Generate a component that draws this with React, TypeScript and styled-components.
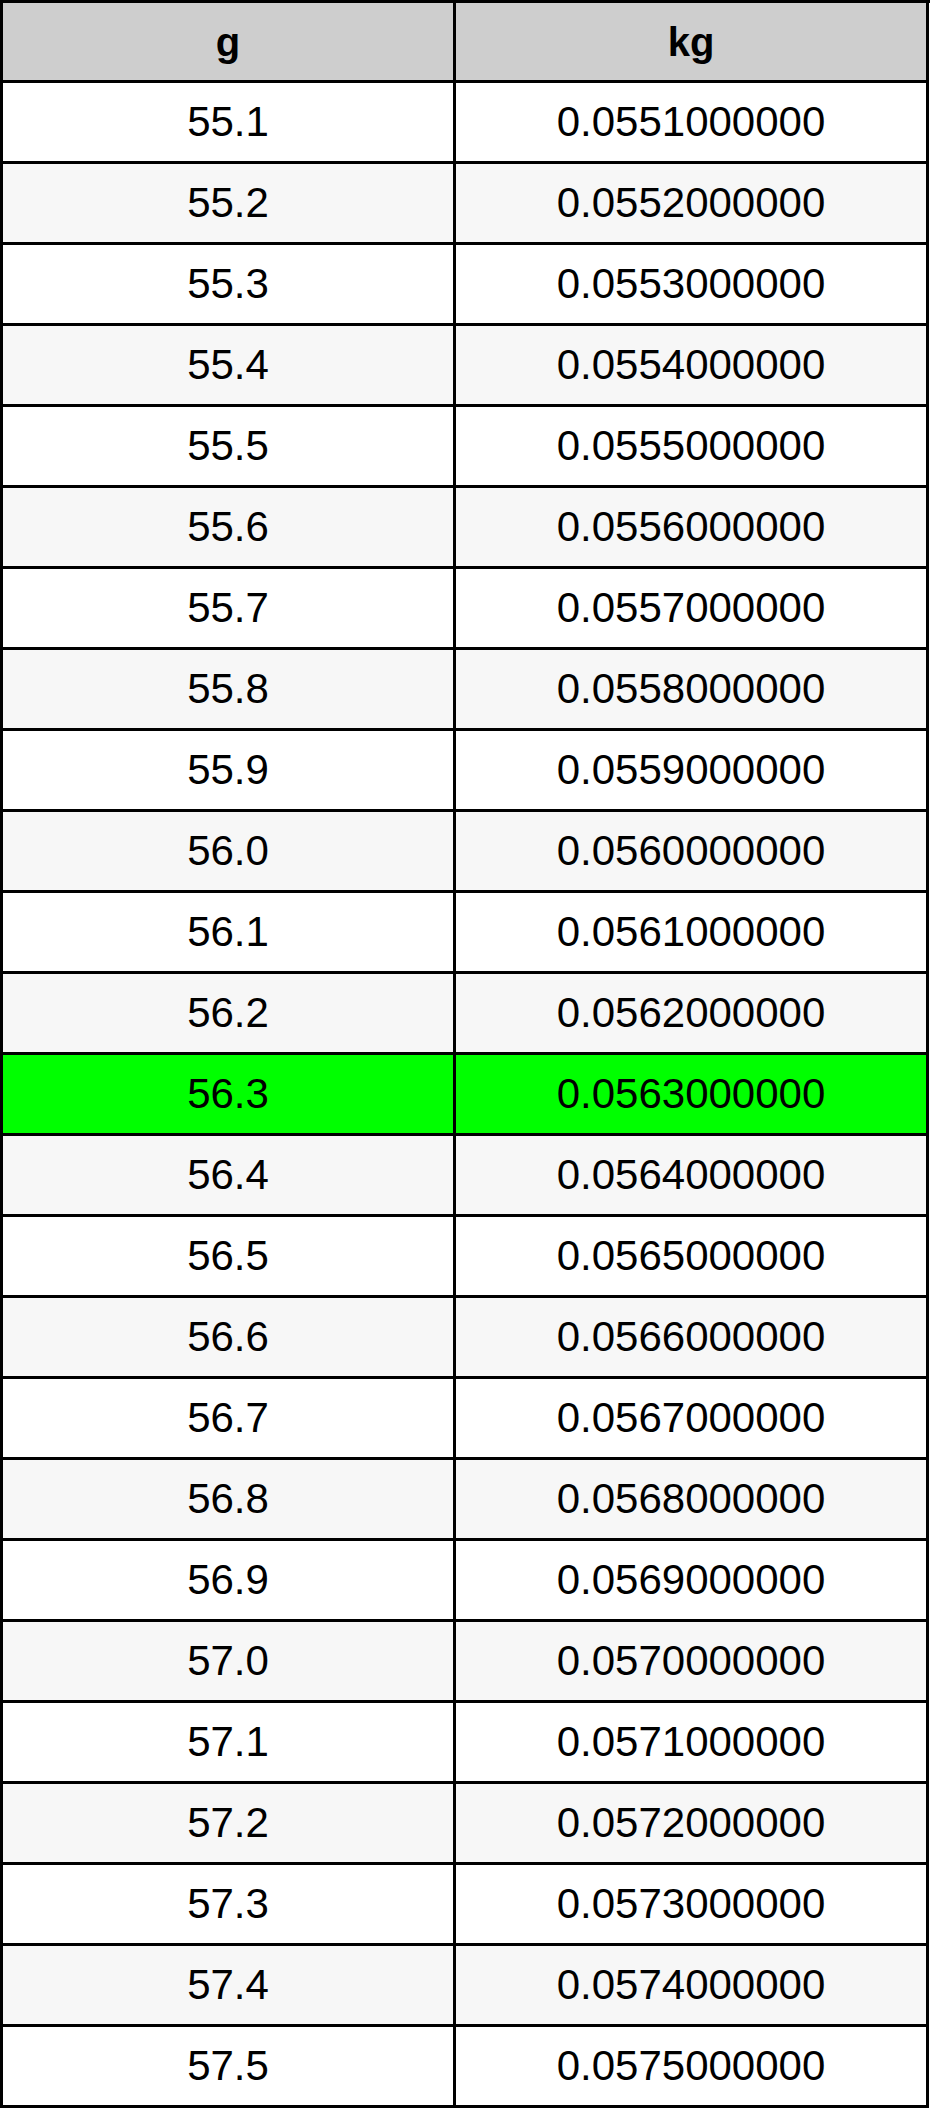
import React from "react";
import styled, { createGlobalStyle } from "styled-components";

const Global = createGlobalStyle`
  html, body { margin: 0; padding: 0; background: #ffffff; }
  body { font-family: "Liberation Sans", Arial, sans-serif; }
`;

const Table = styled.div`
  width: 929px;
  display: grid;
  grid-template-columns: 453px 473px;
  border-top: 3px solid #000;
  border-left: 3px solid #000;
  box-sizing: content-box;
`;

const Row = styled.div<{ $bg: string; $head?: boolean }>`
  display: contents;
  & > div {
    background: ${(p) => p.$bg};
    height: ${(p) => (p.$head ? 77 : 78)}px;
    font-weight: ${(p) => (p.$head ? 700 : 400)};
    font-size: ${(p) => (p.$head ? 40 : 42)}px;
  }
`;

const Cell = styled.div`
  display: flex;
  align-items: center;
  justify-content: center;
  border-right: 3px solid #000;
  border-bottom: 3px solid #000;
  color: #000;
  line-height: 1;
`;

const rows: { g: string; kg: string }[] = [];
for (let i = 0; i < 25; i++) {
  const v = 551 + i;
  const g = (v / 10).toFixed(1);
  const kg = "0.0" + String(v) + "000000";
  rows.push({ g, kg });
}

export default function App() {
  return (
    <>
      <Global />
      <Table>
        <Row $bg="#cecece" $head>
          <Cell>g</Cell>
          <Cell>kg</Cell>
        </Row>
        {rows.map((r, i) => (
          <Row
            key={r.g}
            $bg={r.g === "56.3" ? "#00ff00" : i % 2 === 0 ? "#ffffff" : "#f7f7f7"}
          >
            <Cell>{r.g}</Cell>
            <Cell>{r.kg}</Cell>
          </Row>
        ))}
      </Table>
    </>
  );
}
